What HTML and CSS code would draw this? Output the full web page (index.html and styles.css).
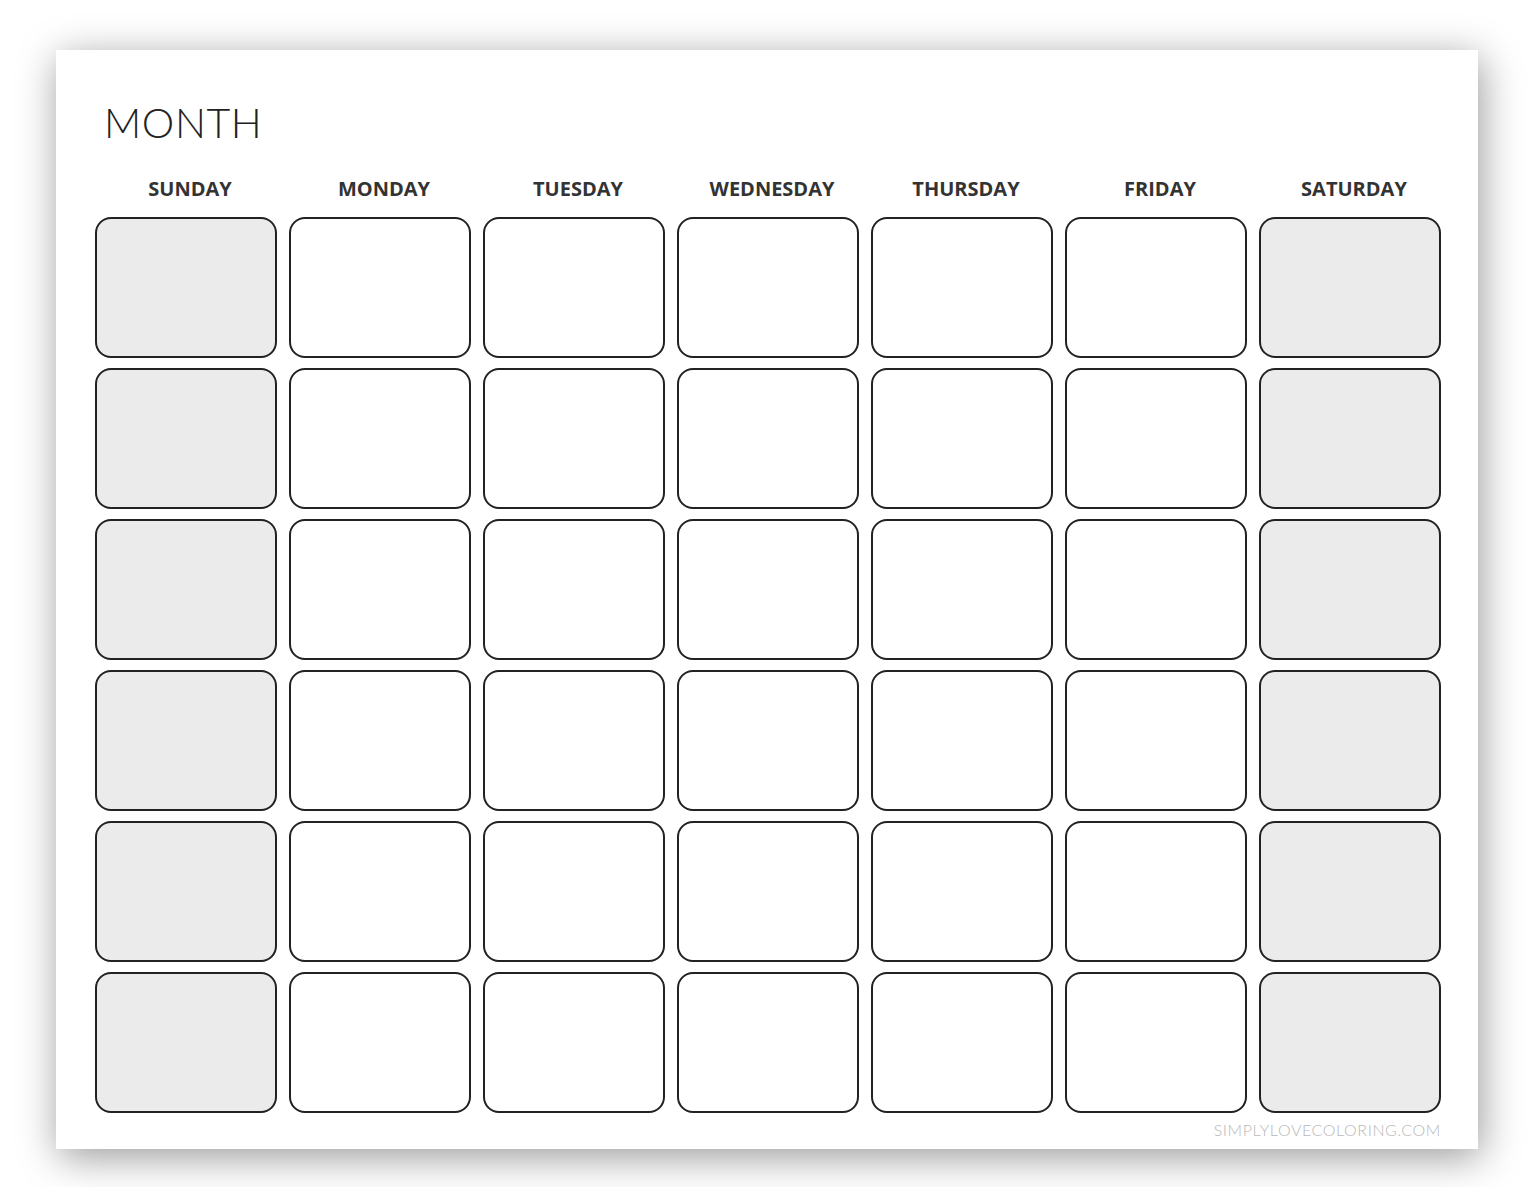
FILE: index.html
```html
<!DOCTYPE html>
<html>
<head>
<meta charset="utf-8">
<link rel="stylesheet" href="styles.css">
</head>
<body>
<div class="paper">
  <h1 class="title">MONTH</h1>
  <div class="days">
    <div>SUNDAY</div><div>MONDAY</div><div>TUESDAY</div><div>WEDNESDAY</div><div>THURSDAY</div><div>FRIDAY</div><div>SATURDAY</div>
  </div>
  <div class="grid">
    <div class="cell we"></div><div class="cell"></div><div class="cell"></div><div class="cell"></div><div class="cell"></div><div class="cell"></div><div class="cell we"></div>
    <div class="cell we"></div><div class="cell"></div><div class="cell"></div><div class="cell"></div><div class="cell"></div><div class="cell"></div><div class="cell we"></div>
    <div class="cell we"></div><div class="cell"></div><div class="cell"></div><div class="cell"></div><div class="cell"></div><div class="cell"></div><div class="cell we"></div>
    <div class="cell we"></div><div class="cell"></div><div class="cell"></div><div class="cell"></div><div class="cell"></div><div class="cell"></div><div class="cell we"></div>
    <div class="cell we"></div><div class="cell"></div><div class="cell"></div><div class="cell"></div><div class="cell"></div><div class="cell"></div><div class="cell we"></div>
    <div class="cell we"></div><div class="cell"></div><div class="cell"></div><div class="cell"></div><div class="cell"></div><div class="cell"></div><div class="cell we"></div>
  </div>
  <div class="credit">SIMPLYLOVECOLORING.COM</div>
</div>
</body>
</html>
```
FILE: styles.css
```css
html, body {
  margin: 0;
  background: #ffffff;
}
body {
  padding: 50px 0 0 56px;
  height: 1187px;
  box-sizing: border-box;
  overflow: hidden;
}
.paper {
  width: 1422px;
  height: 1099px;
  box-sizing: border-box;
  background: #ffffff;
  box-shadow: 3px 8px 38px rgba(0, 0, 0, 0.4);
  padding: 0 37px 0 39px;
  display: flex;
  flex-direction: column;
}
.title {
  margin: 50px 0 0 9px;
  font-family: "Lato", "Liberation Sans", sans-serif;
  font-weight: 300;
  font-size: 41px;
  line-height: 46px;
  color: #222222;
  letter-spacing: 0.6px;
}
.days {
  display: grid;
  grid-template-columns: repeat(7, 182px);
  column-gap: 12px;
  margin-top: 31px;
  font-family: "Open Sans", "Liberation Sans", sans-serif;
  font-weight: 700;
  font-size: 20px;
  line-height: 24px;
  color: #333333;
  text-align: center;
  padding-left: 4px;
}
.grid {
  display: grid;
  grid-template-columns: repeat(7, 182px);
  grid-auto-rows: 141px;
  column-gap: 12px;
  row-gap: 10px;
  margin-top: 16px;
}
.cell {
  border: 2px solid #222222;
  border-radius: 16px;
  background: #ffffff;
}
.cell.we {
  background: #ebebeb;
}
.credit {
  align-self: flex-end;
  margin-top: 9px;
  font-family: "Lato", "Liberation Sans", sans-serif;
  font-weight: 300;
  font-size: 16px;
  line-height: 16px;
  color: #b8b8b8;
  letter-spacing: 0.6px;
}
```
